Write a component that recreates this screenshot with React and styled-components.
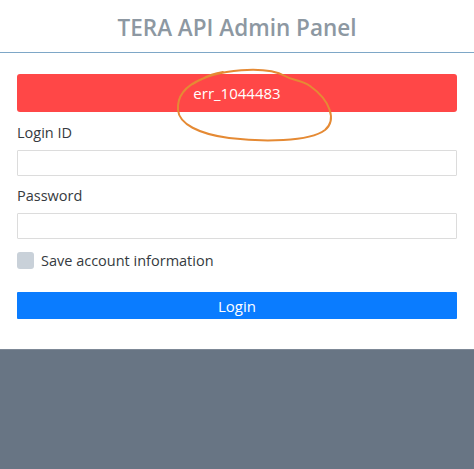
import React from "react";
import styled, { createGlobalStyle } from "styled-components";

const Global = createGlobalStyle`
  html, body { margin: 0; padding: 0; background: #ffffff; }
  body { font-family: "Open Sans", "Noto Sans", sans-serif; }
  * { box-sizing: border-box; }
`;

const Page = styled.div`
  min-height: 469px;
  display: flex;
  flex-direction: column;
`;

const Header = styled.header`
  height: 53px;
  display: flex;
  align-items: center;
  justify-content: center;
  border-bottom: 1px solid #7ea7c7;
  padding-top: 2px;
`;

const Title = styled.h1`
  margin: 0;
  font-size: 22.5px;
  font-weight: 600;
  color: #8d98a2;
`;

const Form = styled.main`
  padding: 21px 17px 30px;
  display: flex;
  flex-direction: column;
`;

const AlertWrap = styled.div`
  position: relative;
`;

const Alert = styled.div`
  height: 38px;
  border-radius: 3px;
  background: #ff4747;
  color: #ffffff;
  font-size: 15px;
  display: flex;
  align-items: center;
  justify-content: center;
`;

const Scribble = styled.svg`
  position: absolute;
  left: 0;
  top: 0;
  overflow: visible;
  pointer-events: none;
`;

const Label = styled.label`
  display: block;
  font-size: 14.5px;
  line-height: 20px;
  color: #353a40;
  margin-top: ${(p) => p.$top}px;
  margin-bottom: 7px;
`;

const Input = styled.input`
  display: block;
  width: 100%;
  height: 26px;
  border: 1px solid #dcdcdc;
  border-radius: 1px;
  background: #fff;
  outline: none;
`;

const CheckRow = styled.label`
  display: flex;
  align-items: center;
  gap: 7px;
  margin-top: 12px;
  font-size: 14.5px;
  color: #353a40;
`;

const Box = styled.span`
  width: 17px;
  height: 17px;
  border-radius: 3px;
  background: #c9d1d9;
  flex: none;
`;

const Button = styled.button`
  margin-top: 22px;
  height: 27px;
  border: none;
  border-radius: 1px;
  background: #0a7cff;
  color: #fff;
  font-family: inherit;
  font-size: 15px;
  padding: 0;
`;

const Footer = styled.footer`
  flex: 1;
  background: #687584;
  border-top: 1px solid #7d8896;
`;

export default function App() {
  return (
    <Page>
      <Global />
      <Header>
        <Title>TERA API Admin Panel</Title>
      </Header>
      <Form>
        <AlertWrap>
          <Alert>err_1044483</Alert>
          <Scribble width="440" height="70">
            <path
              d="M 176 10 C 200 -6, 250 -8, 268 2 C 276 7, 283 5, 293 12 C 313 26, 320 46, 308 56 C 292 68, 245 68, 212 64 C 182 60, 162 50, 161 36 C 160 22, 168 12, 185 5 C 192 1, 200 -1, 206 -2"
              fill="none"
              stroke="#e58a34"
              strokeWidth="2"
              strokeLinecap="round"
            />
          </Scribble>
        </AlertWrap>
        <Label $top={11}>Login ID</Label>
        <Input type="text" />
        <Label $top={10}>Password</Label>
        <Input type="password" />
        <CheckRow>
          <Box />
          Save account information
        </CheckRow>
        <Button>Login</Button>
      </Form>
      <Footer />
    </Page>
  );
}
